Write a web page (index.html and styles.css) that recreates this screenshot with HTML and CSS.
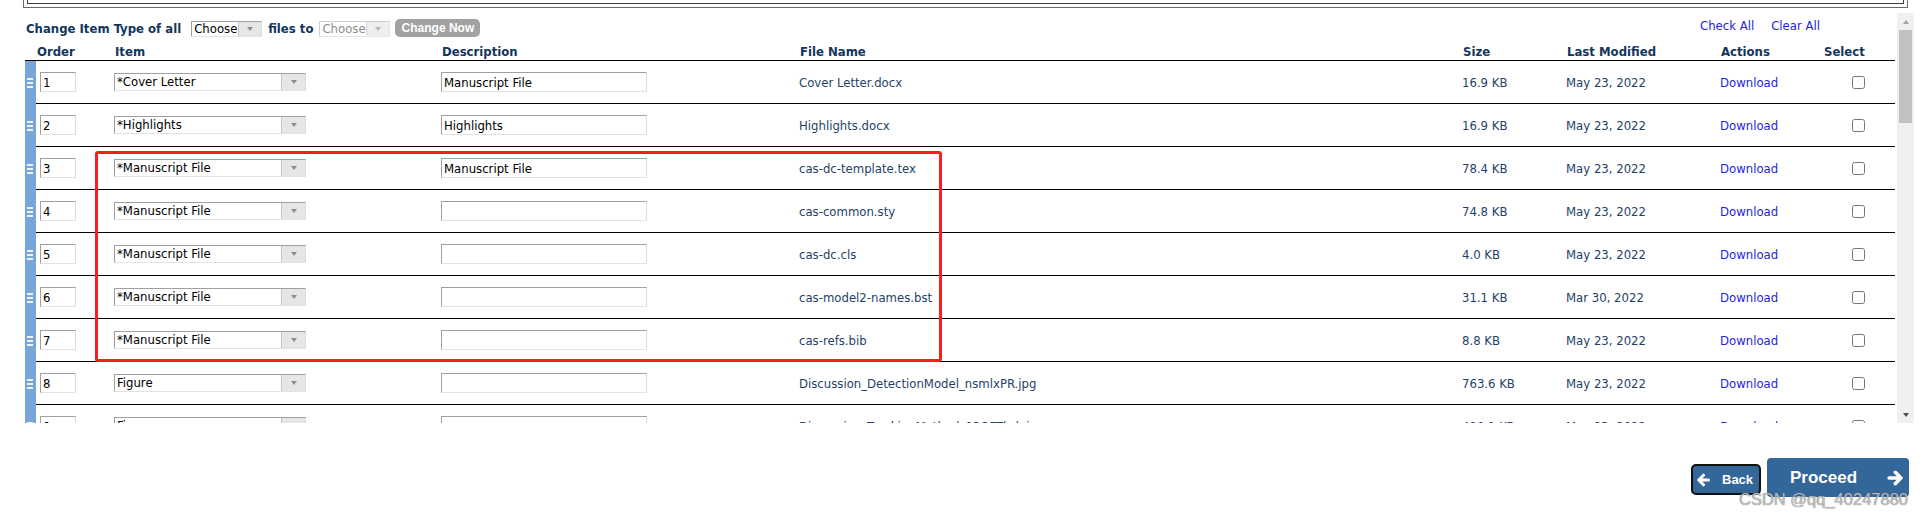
FILE: index.html
```html
<!DOCTYPE html>
<html lang="en">
<head>
<meta charset="utf-8">
<title>Attach Files</title>
<link rel="stylesheet" href="styles.css">
</head>
<body>
<div class="page">
  <div class="topbox"></div>
  <div class="scrollwrap">
    <div class="scroll">
      <div class="toolbar">
        <span class="lbl">Change Item Type of all</span>
        <div class="mini first"><span>Choose</span><i></i></div>
        <span class="lbl files">files to</span>
        <div class="mini off"><span>Choose</span><i></i></div>
        <button class="chg">Change Now</button>
        <a class="lnk check">Check All</a>
        <a class="lnk clear">Clear All</a>
      </div>
      <table class="files">
        <colgroup>
          <col class="c-grip"><col class="c-order"><col class="c-item"><col class="c-desc"><col class="c-file"><col class="c-size"><col class="c-date"><col class="c-act"><col class="c-sel">
        </colgroup>
        <thead>
          <tr><th></th><th>Order</th><th>Item</th><th>Description</th><th>File Name</th><th>Size</th><th>Last Modified</th><th>Actions</th><th>Select</th></tr>
        </thead>
        <tbody>
          <tr><td class="g"><span class="grip"></span></td><td><input class="ord" value="1"></td><td><div class="sel"><span>*Cover Letter</span><i></i></div></td><td><input class="desc" value="Manuscript File"></td><td>Cover Letter.docx</td><td>16.9 KB</td><td>May 23, 2022</td><td><a class="dl">Download</a></td><td><input type="checkbox" class="cb"></td></tr>
          <tr><td class="g"><span class="grip"></span></td><td><input class="ord" value="2"></td><td><div class="sel"><span>*Highlights</span><i></i></div></td><td><input class="desc" value="Highlights"></td><td>Highlights.docx</td><td>16.9 KB</td><td>May 23, 2022</td><td><a class="dl">Download</a></td><td><input type="checkbox" class="cb"></td></tr>
          <tr><td class="g"><span class="grip"></span></td><td><input class="ord" value="3"></td><td><div class="sel"><span>*Manuscript File</span><i></i></div></td><td><input class="desc" value="Manuscript File"></td><td>cas-dc-template.tex</td><td>78.4 KB</td><td>May 23, 2022</td><td><a class="dl">Download</a></td><td><input type="checkbox" class="cb"></td></tr>
          <tr><td class="g"><span class="grip"></span></td><td><input class="ord" value="4"></td><td><div class="sel"><span>*Manuscript File</span><i></i></div></td><td><input class="desc" value=""></td><td>cas-common.sty</td><td>74.8 KB</td><td>May 23, 2022</td><td><a class="dl">Download</a></td><td><input type="checkbox" class="cb"></td></tr>
          <tr><td class="g"><span class="grip"></span></td><td><input class="ord" value="5"></td><td><div class="sel"><span>*Manuscript File</span><i></i></div></td><td><input class="desc" value=""></td><td>cas-dc.cls</td><td>4.0 KB</td><td>May 23, 2022</td><td><a class="dl">Download</a></td><td><input type="checkbox" class="cb"></td></tr>
          <tr><td class="g"><span class="grip"></span></td><td><input class="ord" value="6"></td><td><div class="sel"><span>*Manuscript File</span><i></i></div></td><td><input class="desc" value=""></td><td>cas-model2-names.bst</td><td>31.1 KB</td><td>Mar 30, 2022</td><td><a class="dl">Download</a></td><td><input type="checkbox" class="cb"></td></tr>
          <tr><td class="g"><span class="grip"></span></td><td><input class="ord" value="7"></td><td><div class="sel"><span>*Manuscript File</span><i></i></div></td><td><input class="desc" value=""></td><td>cas-refs.bib</td><td>8.8 KB</td><td>May 23, 2022</td><td><a class="dl">Download</a></td><td><input type="checkbox" class="cb"></td></tr>
          <tr><td class="g"><span class="grip"></span></td><td><input class="ord" value="8"></td><td><div class="sel"><span>Figure</span><i></i></div></td><td><input class="desc" value=""></td><td>Discussion_DetectionModel_nsmlxPR.jpg</td><td>763.6 KB</td><td>May 23, 2022</td><td><a class="dl">Download</a></td><td><input type="checkbox" class="cb"></td></tr>
          <tr><td class="g"><span class="grip"></span></td><td><input class="ord" value="9"></td><td><div class="sel"><span>Figure</span><i></i></div></td><td><input class="desc" value=""></td><td>Discussion_TrackingMethod_03OFTlwk.jpg</td><td>490.1 KB</td><td>May 23, 2022</td><td><a class="dl">Download</a></td><td><input type="checkbox" class="cb"></td></tr>
        </tbody>
      </table>
    </div>
    <div class="vbar">
      <span class="vbtn up"></span>
      <span class="track"><span class="thumb"></span></span>
      <span class="vbtn down"></span>
    </div>
  </div>
  <div class="actions-bar">
    <button class="back"><svg class="ico" width="13" height="14" viewBox="0 0 13 14"><path d="M11.5 7H2M6.5 2.2L1.8 7l4.7 4.8" fill="none" stroke="#fff" stroke-width="3" stroke-linecap="round" stroke-linejoin="round"/></svg><span>Back</span></button>
    <button class="proceed"><span>Proceed</span><svg class="ico" width="16" height="18" viewBox="0 0 16 18"><path d="M2 9h11.5M8.3 3.2L14 9l-5.7 5.8" fill="none" stroke="#fff" stroke-width="3.4" stroke-linecap="round" stroke-linejoin="round"/></svg></button>
  </div>
  <div class="redbox"></div>
  <div class="wm">CSDN @qq_40247880</div>
</div>
</body>
</html>
```
FILE: styles.css
```css
html, body {
  margin: 0;
  background: #fff;
}
body {
  font-family: "DejaVu Sans Condensed", "DejaVu Sans", sans-serif;
  font-size: 13px;
  color: #1f3f68;
}
.page {
  position: relative;
  height: 517px;
  overflow: hidden;
  padding: 0 10px 0 23px;
}
.topbox {
  height: 30px;
  margin: -22px 6px 0 0;
  box-sizing: border-box;
  border: 1px solid #6b6b6b;
  box-shadow: inset 0 0 0 3px #fff, inset 0 0 0 4px #3c3c3c;
}

/* scrolling panel with its scrollbar */
.scrollwrap {
  display: grid;
  grid-template-columns: 1fr 17px;
  height: 410px;
  margin-top: 5px;
}
.scroll {
  overflow: hidden;
  padding: 6px 2px 0;
}
.vbar {
  display: flex;
  flex-direction: column;
  background: #f0f0f0;
}
.vbtn {
  display: flex;
  align-items: center;
  justify-content: center;
  height: 17px;
  flex: none;
}
.vbtn::after {
  content: "";
  border-left: 3.5px solid transparent;
  border-right: 3.5px solid transparent;
}
.vbtn.up::after { border-bottom: 4px solid #a3a3a3; }
.vbtn.down::after { border-top: 4px solid #505050; }
.track {
  flex: 1;
  display: block;
}
.thumb {
  display: block;
  height: 93px;
  margin: 0 2px;
  background: #c1c1c1;
}

/* toolbar */
.toolbar {
  display: flex;
  align-items: center;
  height: 18px;
  padding-left: 1px;
}
.lbl {
  font-weight: bold;
  color: #12355c;
}
.mini {
  display: flex;
  width: 71px;
  height: 16px;
  box-sizing: border-box;
  border: 1px solid;
  border-color: #a0a0a0 #dcdcdc #e3e3e3 #a0a0a0;
  background: #fff;
  color: #000;
  margin-top: 2px;
}
.mini.first { margin-left: 10px; margin-right: 6px; }
.mini span {
  flex: 1;
  line-height: 14px;
  padding-left: 2px;
  overflow: hidden;
  white-space: nowrap;
}
.mini i, .sel i {
  display: flex;
  align-items: center;
  justify-content: center;
  width: 22px;
  background: #e6e6e6;
  border-left: 1px solid #c4c4c4;
}
.mini i::after, .sel i::after {
  content: "";
  border-left: 3.5px solid transparent;
  border-right: 3.5px solid transparent;
  border-top: 4px solid #8c8c8c;
}
.mini.off {
  margin-left: 6px;
  color: #8d8d8d;
  border-color: #cfcfcf #e6e6e6 #e6e6e6 #cfcfcf;
}
.mini.off i { background: #eeeeee; border-left-color: #dcdcdc; }
.mini.off i::after { border-top-color: #b4b4b4; }
.chg {
  margin-left: 5px;
  width: 85px;
  height: 18px;
  padding: 0;
  border: 0;
  border-radius: 5px;
  background: #a2a2a2;
  color: #fff;
  font: bold 12px "Liberation Sans", Arial, sans-serif;
}
.lnk {
  color: #2424dc;
  align-self: flex-start;
  line-height: 14px;
}
.lnk.check { margin-left: auto; }
.lnk.clear { margin-left: 17px; margin-right: 75px; }

/* table */
table.files {
  width: 1870px;
  table-layout: fixed;
  border-collapse: separate;
  border-spacing: 0;
}
.c-grip { width: 11px; }
.c-order { width: 78px; }
.c-item { width: 327px; }
.c-desc { width: 358px; }
.c-file { width: 663px; }
.c-size { width: 104px; }
.c-date { width: 154px; }
.c-act { width: 103px; }
.c-sel { width: 72px; }
thead tr { height: 24px; }
th {
  height: 24px;
  padding: 0 0 0 1px;
  box-sizing: border-box;
  vertical-align: bottom;
  text-align: left;
  font-weight: bold;
  color: #12355c;
  line-height: 16px;
  border-bottom: 1px solid #000;
  white-space: nowrap;
}
tbody tr { height: 43px; }
td {
  padding: 0;
  vertical-align: middle;
  border-bottom: 1px solid #000;
  white-space: nowrap;
  overflow: hidden;
}
td.g {
  background: #78a6d9;
  border-bottom: 0;
}
.grip {
  display: block;
  width: 6px;
  height: 10px;
  margin: 1px 0 0 2px;
  background: repeating-linear-gradient(to bottom, #eef3fa 0 2px, transparent 2px 4px);
}
.ord, .desc {
  box-sizing: border-box;
  height: 20px;
  border: 1px solid;
  border-color: #a0a0a0 #dcdcdc #e3e3e3 #a0a0a0;
  padding: 0 0 0 2px;
  font: 13px "DejaVu Sans Condensed", "DejaVu Sans", sans-serif;
  color: #000;
  background: #fff;
  display: block;
  outline: none;
}
.ord { width: 36px; margin-left: 4px; }
.desc { width: 206px; }
.sel {
  display: flex;
  width: 192px;
  height: 18px;
  box-sizing: border-box;
  border: 1px solid;
  border-color: #a0a0a0 #dcdcdc #e3e3e3 #a0a0a0;
  background: #fff;
  color: #000;
}
.sel span {
  flex: 1;
  padding-left: 2px;
  line-height: 16px;
  overflow: hidden;
}
.sel i { width: 23px; }
.dl { color: #1f1fe0; }
.cb {
  display: block;
  width: 13px;
  height: 13px;
  margin: 0 0 0 29px;
}

/* bottom buttons */
.actions-bar {
  display: flex;
  justify-content: flex-end;
  align-items: flex-end;
  gap: 6px;
  margin-top: 35px;
  padding-right: 5px;
}
.back {
  display: flex;
  align-items: center;
  gap: 12px;
  width: 70px;
  height: 31px;
  box-sizing: border-box;
  margin-bottom: 2px;
  padding: 0 0 0 4px;
  border: 2px solid #111;
  border-radius: 5px;
  background: #336699;
  color: #fff;
  font: bold 13px "Liberation Sans", Arial, sans-serif;
}
.proceed {
  display: flex;
  align-items: center;
  justify-content: space-between;
  width: 142px;
  height: 39px;
  box-sizing: border-box;
  padding: 0 6px 0 23px;
  border: 0;
  border-radius: 4px;
  background: #336699;
  color: #fff;
  font: bold 17px "Liberation Sans", Arial, sans-serif;
}
.ico { display: block; flex: none; }

/* overlays */
.redbox {
  position: absolute;
  left: 95px;
  top: 151px;
  width: 847px;
  height: 211px;
  box-sizing: border-box;
  border: 3px solid #fb1c1c;
  border-radius: 3px;
  pointer-events: none;
}
.wm {
  position: absolute;
  left: 1739px;
  top: 491px;
  font: 16.5px/16.5px "Liberation Sans", Arial, sans-serif;
  color: rgba(205, 205, 205, 0.85);
  text-shadow: 0 0 1px #5a5a5a;
  white-space: nowrap;
}
```
